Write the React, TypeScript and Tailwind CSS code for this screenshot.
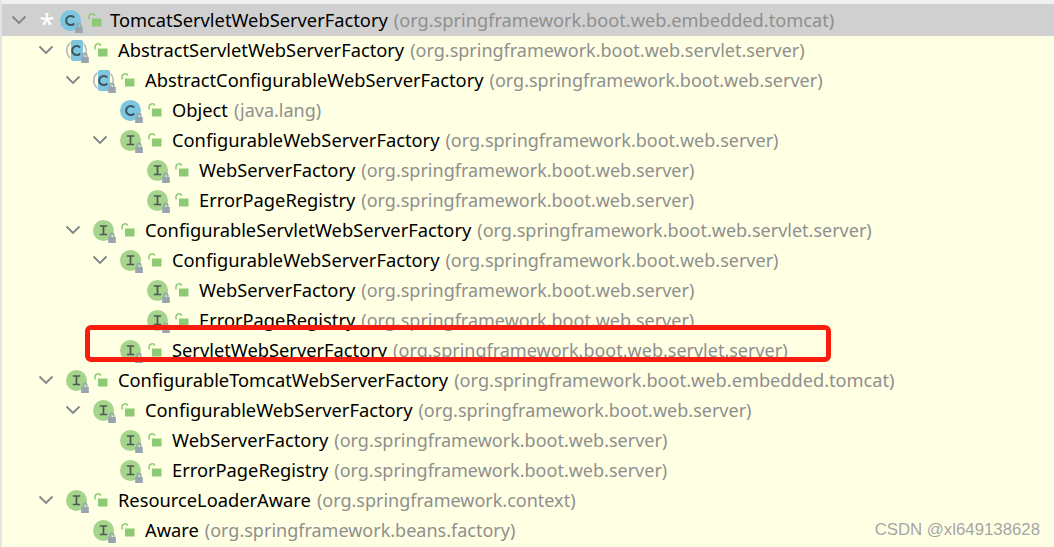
import React from "react";

type Kind = "c" | "a" | "i";

interface RowData {
    depth: number;
    kind: Kind;
    name: string;
    pkg: string;
    leaf?: boolean;
}

const rows: RowData[] = [
    { depth: 1, kind: "a", name: "AbstractServletWebServerFactory", pkg: "(org.springframework.boot.web.servlet.server)" },
    { depth: 2, kind: "a", name: "AbstractConfigurableWebServerFactory", pkg: "(org.springframework.boot.web.server)" },
    { depth: 3, kind: "c", name: "Object", pkg: "(java.lang)", leaf: true },
    { depth: 3, kind: "i", name: "ConfigurableWebServerFactory", pkg: "(org.springframework.boot.web.server)" },
    { depth: 4, kind: "i", name: "WebServerFactory", pkg: "(org.springframework.boot.web.server)", leaf: true },
    { depth: 4, kind: "i", name: "ErrorPageRegistry", pkg: "(org.springframework.boot.web.server)", leaf: true },
    { depth: 2, kind: "i", name: "ConfigurableServletWebServerFactory", pkg: "(org.springframework.boot.web.servlet.server)" },
    { depth: 3, kind: "i", name: "ConfigurableWebServerFactory", pkg: "(org.springframework.boot.web.server)" },
    { depth: 4, kind: "i", name: "WebServerFactory", pkg: "(org.springframework.boot.web.server)", leaf: true },
    { depth: 4, kind: "i", name: "ErrorPageRegistry", pkg: "(org.springframework.boot.web.server)", leaf: true },
    { depth: 3, kind: "i", name: "ServletWebServerFactory", pkg: "(org.springframework.boot.web.servlet.server)", leaf: true },
    { depth: 1, kind: "i", name: "ConfigurableTomcatWebServerFactory", pkg: "(org.springframework.boot.web.embedded.tomcat)" },
    { depth: 2, kind: "i", name: "ConfigurableWebServerFactory", pkg: "(org.springframework.boot.web.server)" },
    { depth: 3, kind: "i", name: "WebServerFactory", pkg: "(org.springframework.boot.web.server)", leaf: true },
    { depth: 3, kind: "i", name: "ErrorPageRegistry", pkg: "(org.springframework.boot.web.server)", leaf: true },
    { depth: 1, kind: "i", name: "ResourceLoaderAware", pkg: "(org.springframework.context)" },
    { depth: 2, kind: "i", name: "Aware", pkg: "(org.springframework.beans.factory)", leaf: true },
];

const indent: Record<number, string> = {
    1: "pl-[35px]",
    2: "pl-[62px]",
    3: "pl-[89px]",
    4: "pl-[116px]",
};

const Chevron = () => (
    <svg width="18" height="12" viewBox="0 0 18 12" className="shrink-0">
        <path d="M2.5 2.5 L9 9 L15.5 2.5" fill="none" stroke="#7f8589" strokeWidth="1.8" />
    </svg>
);

const NodeIcon = ({ kind }: { kind: Kind }) => (
    <svg width="28" height="28" viewBox="0 0 28 28" className="shrink-0">
        {kind === "i" && <circle cx="10.5" cy="14.5" r="10.5" fill="#a5d48c" />}
        {kind === "c" && <circle cx="10.5" cy="14.5" r="10.5" fill="#7cc6de" />}
        {kind === "a" && (
            <>
                <circle cx="10.5" cy="14.5" r="9.8" fill="none" stroke="#b3bcc2" strokeWidth="1.6" />
                <rect x="4.5" y="4" width="13" height="21" rx="2" fill="#ffffe4" />
                <rect x="5" y="4" width="12" height="21" rx="2" fill="#7cc6de" />
            </>
        )}
        {kind === "i" ? (
            <path d="M6.8 10 H14.2 M10.5 10 V18.5 M6.8 18.5 H14.2" fill="none" stroke="#4d5a50" strokeWidth="1.7" />
        ) : (
            <path d="M14.2 11.5 A4.6 4.6 0 1 0 14.2 17.5" fill="none" stroke="#3f5662" strokeWidth="2" />
        )}
        <path d="M17 21 V19.2 A1.9 1.9 0 0 1 20.8 19.2 V21" fill="none" stroke="#98a4ae" strokeWidth="1.4" />
        <rect x="15.2" y="21" width="7.6" height="6" fill="#98a4ae" />
    </svg>
);

const OpenLock = () => (
    <svg width="14" height="14" viewBox="0 0 14 14" className="shrink-0">
        <path d="M1 6.5 V4 A3 3 0 0 1 6.8 2.8" fill="none" stroke="#8ccb73" strokeWidth="1.5" />
        <rect x="4" y="5.5" width="9.5" height="8" fill="#8ccb73" />
    </svg>
);

const Label = ({ name, pkg, pkgSize }: { name: string; pkg: string; pkgSize: string }) => (
    <span className="whitespace-nowrap">
        <span className="text-[18.3px] text-black">{name}</span>
        <span className={`ml-[6px] ${pkgSize} text-[#8f8f8f]`}>{pkg}</span>
    </span>
);

const Row = ({ depth, kind, name, pkg, leaf }: RowData) => (
    <div className={`flex h-[30px] items-center ${indent[depth]}`}>
        <div className="flex w-[18px] shrink-0 justify-center">{!leaf && <Chevron />}</div>
        <div className="ml-[11px] flex items-center">
            <NodeIcon kind={kind} />
        </div>
        <div className="mr-[10px] flex items-center">
            <OpenLock />
        </div>
        <Label name={name} pkg={pkg} pkgSize={pkg.includes("tomcat") ? "text-[18.2px]" : "text-[18px]"} />
    </div>
);

export default function App() {
    return (
        <div
            className="relative h-[547px] w-[1054px] overflow-hidden bg-[#ffffe4] pl-[2px] pt-[4px]"
            style={{ fontFamily: '"Noto Sans", "Open Sans", sans-serif' }}
        >
            <div className="absolute left-0 top-0 h-[4px] w-full bg-[#f0f0f0]" />
            <div className="absolute bottom-0 left-0 top-0 w-[2px] bg-[#e4e4e4]" />
            <div className="-mb-[1px] flex h-[32px] items-center bg-[#d0d0d0] pl-[8px]">
                <div className="flex w-[18px] shrink-0 justify-center">
                    <Chevron />
                </div>
                <span className="ml-[10px] w-[18px] shrink-0 pt-[7px] text-center text-[27px] leading-none text-white">*</span>
                <div className="ml-[4px] flex items-center">
                    <NodeIcon kind="c" />
                </div>
                <div className="mr-[8px] flex items-center">
                    <OpenLock />
                </div>
                <Label name="TomcatServletWebServerFactory" pkg="(org.springframework.boot.web.embedded.tomcat)" pkgSize="text-[18.2px]" />
            </div>
            {rows.map((r, i) => (
                <Row key={i} {...r} />
            ))}
            <div className="absolute left-[85px] top-[325px] h-[37px] w-[746px] rounded-[6px] border-[5px] border-[#fb1c10]" />
            <span
                className="absolute right-[14px] top-[522px] text-[16.8px] leading-none text-[#a6a6a6]"
                style={{ fontFamily: '"Liberation Sans", sans-serif' }}
            >
                CSDN @xl649138628
            </span>
        </div>
    );
}
